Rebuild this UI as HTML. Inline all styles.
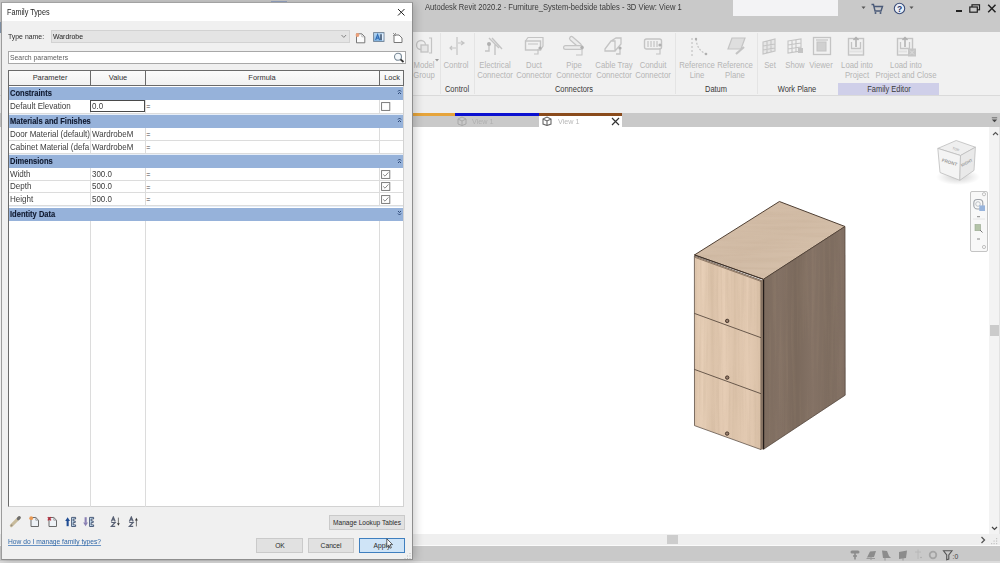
<!DOCTYPE html>
<html><head><meta charset="utf-8">
<style>
*{box-sizing:border-box}
html,body{margin:0;padding:0}
body{width:1000px;height:563px;overflow:hidden;position:relative;background:#fff;font-family:"Liberation Sans",sans-serif;color:#222}
.a{position:absolute}
.t{position:absolute;white-space:nowrap;line-height:1}
</style></head>
<body>

<div class="a" style="left:0px;top:0px;width:1000px;height:32px;background:#c9c9c9"></div>
<div class="t " style="left:424.5px;top:2.52px;font-size:8.6px;color:#3a3a3a;font-weight:400;transform:scaleX(0.885);transform-origin:0 0;">Autodesk Revit 2020.2 - Furniture_System-bedside tables - 3D View: View 1</div>
<div class="a" style="left:733px;top:0px;width:105px;height:16px;background:#f3f3f5"></div>
<svg class="a" style="left:860px;top:5px;" width="8" height="6" viewBox="0 0 8 6"><path d="M1.5 1.5 L3.5 4 L5.5 1.5Z" fill="#555"/></svg>
<svg class="a" style="left:870px;top:2px;" width="14" height="13" viewBox="0 0 14 13"><path d="M1.5 2.5 L3.5 2.5 L5 9 L11 9 L12.5 4.5 L4 4.5" fill="none" stroke="#4a5a78" stroke-width="1.4"/><circle cx="5.5" cy="11" r="1" fill="#4a5a78"/><circle cx="10.5" cy="11" r="1" fill="#4a5a78"/></svg>
<svg class="a" style="left:893px;top:2px;" width="13" height="13" viewBox="0 0 13 13"><circle cx="6.5" cy="6.5" r="5.2" fill="#e8eef8" stroke="#3a4c78" stroke-width="1.1"/><text x="6.5" y="9.6" font-size="8.5" font-weight="bold" text-anchor="middle" fill="#23386a" font-family="Liberation Sans">?</text></svg>
<svg class="a" style="left:908px;top:5px;" width="8" height="6" viewBox="0 0 8 6"><path d="M1.5 1.5 L3.5 4 L5.5 1.5Z" fill="#555"/></svg>
<div class="a" style="left:956px;top:10px;width:6px;height:1.6px;background:#222"></div>
<svg class="a" style="left:969px;top:4px;" width="12" height="9" viewBox="0 0 12 9"><rect x="3" y="0.8" width="7.5" height="5" fill="none" stroke="#222" stroke-width="1.2"/><rect x="0.8" y="3" width="7.5" height="5.2" fill="#c9c9c9" stroke="#222" stroke-width="1.2"/></svg>
<svg class="a" style="left:987px;top:4px;" width="10" height="9" viewBox="0 0 10 9"><path d="M1.2 0.8 L8.5 8.2 M8.5 0.8 L1.2 8.2" stroke="#222" stroke-width="1.5"/></svg>
<div class="a" style="left:0px;top:32px;width:1000px;height:64px;background:#f1f1f1;border-bottom:1px solid #dadada"></div>
<div class="t " style="left:424px;top:60.52px;font-size:8.6px;color:#b5b5b5;font-weight:400;transform:translateX(-50%) scaleX(0.9);transform-origin:50% 0;">Model</div>
<div class="t " style="left:424px;top:70.52px;font-size:8.6px;color:#b5b5b5;font-weight:400;transform:translateX(-50%) scaleX(0.9);transform-origin:50% 0;">Group</div>
<svg class="a" style="left:434px;top:58px;" width="6" height="5" viewBox="0 0 6 5"><path d="M1 1 L3 3.5 L5 1Z" fill="#9a9a9a"/></svg>
<div class="t " style="left:456.3px;top:60.52px;font-size:8.6px;color:#b5b5b5;font-weight:400;transform:translateX(-50%) scaleX(0.9);transform-origin:50% 0;">Control</div>
<div class="t " style="left:494.7px;top:60.52px;font-size:8.6px;color:#b5b5b5;font-weight:400;transform:translateX(-50%) scaleX(0.9);transform-origin:50% 0;">Electrical</div>
<div class="t " style="left:494.7px;top:70.52px;font-size:8.6px;color:#b5b5b5;font-weight:400;transform:translateX(-50%) scaleX(0.9);transform-origin:50% 0;">Connector</div>
<div class="t " style="left:534px;top:60.52px;font-size:8.6px;color:#b5b5b5;font-weight:400;transform:translateX(-50%) scaleX(0.9);transform-origin:50% 0;">Duct</div>
<div class="t " style="left:534px;top:70.52px;font-size:8.6px;color:#b5b5b5;font-weight:400;transform:translateX(-50%) scaleX(0.9);transform-origin:50% 0;">Connector</div>
<div class="t " style="left:574px;top:60.52px;font-size:8.6px;color:#b5b5b5;font-weight:400;transform:translateX(-50%) scaleX(0.9);transform-origin:50% 0;">Pipe</div>
<div class="t " style="left:574px;top:70.52px;font-size:8.6px;color:#b5b5b5;font-weight:400;transform:translateX(-50%) scaleX(0.9);transform-origin:50% 0;">Connector</div>
<div class="t " style="left:613.7px;top:60.52px;font-size:8.6px;color:#b5b5b5;font-weight:400;transform:translateX(-50%) scaleX(0.9);transform-origin:50% 0;">Cable Tray</div>
<div class="t " style="left:613.7px;top:70.52px;font-size:8.6px;color:#b5b5b5;font-weight:400;transform:translateX(-50%) scaleX(0.9);transform-origin:50% 0;">Connector</div>
<div class="t " style="left:653.4px;top:60.52px;font-size:8.6px;color:#b5b5b5;font-weight:400;transform:translateX(-50%) scaleX(0.9);transform-origin:50% 0;">Conduit</div>
<div class="t " style="left:653.4px;top:70.52px;font-size:8.6px;color:#b5b5b5;font-weight:400;transform:translateX(-50%) scaleX(0.9);transform-origin:50% 0;">Connector</div>
<div class="t " style="left:697px;top:60.52px;font-size:8.6px;color:#b5b5b5;font-weight:400;transform:translateX(-50%) scaleX(0.9);transform-origin:50% 0;">Reference</div>
<div class="t " style="left:697px;top:70.52px;font-size:8.6px;color:#b5b5b5;font-weight:400;transform:translateX(-50%) scaleX(0.9);transform-origin:50% 0;">Line</div>
<div class="t " style="left:735px;top:60.52px;font-size:8.6px;color:#b5b5b5;font-weight:400;transform:translateX(-50%) scaleX(0.9);transform-origin:50% 0;">Reference</div>
<div class="t " style="left:735px;top:70.52px;font-size:8.6px;color:#b5b5b5;font-weight:400;transform:translateX(-50%) scaleX(0.9);transform-origin:50% 0;">Plane</div>
<div class="t " style="left:769.6px;top:60.52px;font-size:8.6px;color:#b5b5b5;font-weight:400;transform:translateX(-50%) scaleX(0.9);transform-origin:50% 0;">Set</div>
<div class="t " style="left:795.4px;top:60.52px;font-size:8.6px;color:#b5b5b5;font-weight:400;transform:translateX(-50%) scaleX(0.9);transform-origin:50% 0;">Show</div>
<div class="t " style="left:821.3px;top:60.52px;font-size:8.6px;color:#b5b5b5;font-weight:400;transform:translateX(-50%) scaleX(0.9);transform-origin:50% 0;">Viewer</div>
<div class="t " style="left:856.8px;top:60.52px;font-size:8.6px;color:#b5b5b5;font-weight:400;transform:translateX(-50%) scaleX(0.9);transform-origin:50% 0;">Load into</div>
<div class="t " style="left:856.8px;top:70.52px;font-size:8.6px;color:#b5b5b5;font-weight:400;transform:translateX(-50%) scaleX(0.9);transform-origin:50% 0;">Project</div>
<div class="t " style="left:906.4px;top:60.52px;font-size:8.6px;color:#b5b5b5;font-weight:400;transform:translateX(-50%) scaleX(0.9);transform-origin:50% 0;">Load into</div>
<div class="t " style="left:906.4px;top:70.52px;font-size:8.6px;color:#b5b5b5;font-weight:400;transform:translateX(-50%) scaleX(0.9);transform-origin:50% 0;">Project and Close</div>
<div class="a" style="left:838px;top:82.6px;width:101px;height:12px;background:#cfcfe9"></div>
<div class="t " style="left:456.5px;top:85.17px;font-size:8.3px;color:#3a3a3a;font-weight:400;transform:translateX(-50%) scaleX(0.9);transform-origin:50% 0;">Control</div>
<div class="t " style="left:574px;top:85.17px;font-size:8.3px;color:#3a3a3a;font-weight:400;transform:translateX(-50%) scaleX(0.9);transform-origin:50% 0;">Connectors</div>
<div class="t " style="left:716px;top:85.17px;font-size:8.3px;color:#3a3a3a;font-weight:400;transform:translateX(-50%) scaleX(0.9);transform-origin:50% 0;">Datum</div>
<div class="t " style="left:797px;top:85.17px;font-size:8.3px;color:#3a3a3a;font-weight:400;transform:translateX(-50%) scaleX(0.9);transform-origin:50% 0;">Work Plane</div>
<div class="t " style="left:888.5px;top:85.17px;font-size:8.3px;color:#3a3a3a;font-weight:400;transform:translateX(-50%) scaleX(0.9);transform-origin:50% 0;">Family Editor</div>
<div class="a" style="left:439.5px;top:33px;width:1px;height:61px;background:#e4e4e4"></div>
<div class="a" style="left:473.5px;top:33px;width:1px;height:61px;background:#e4e4e4"></div>
<div class="a" style="left:675px;top:33px;width:1px;height:61px;background:#e4e4e4"></div>
<div class="a" style="left:757px;top:33px;width:1px;height:61px;background:#e4e4e4"></div>
<svg class="a" style="left:414px;top:36px;" width="20" height="20" viewBox="0 0 20 20"><circle cx="7" cy="9" r="4.5" fill="none" stroke="#c4c4c4" stroke-width="1.3"/><rect x="7" y="9" width="7" height="7" fill="#e6e6e6" stroke="#c4c4c4" stroke-width="1.3"/><path d="M15 2 L17.5 2 L17.5 17 L15 17" fill="none" stroke="#c4c4c4" stroke-width="1.2"/></svg>
<svg class="a" style="left:447px;top:36px;" width="20" height="20" viewBox="0 0 20 20"><path d="M10 1 V19 M3 12 H9 M11 7 H17 M14 5 L17 7 L14 9 M5 10 L3 12 L5 14" fill="none" stroke="#c4c4c4" stroke-width="1.2"/></svg>
<svg class="a" style="left:484px;top:36px;" width="20" height="20" viewBox="0 0 20 20"><path d="M5 2 L15 12 M8 2 L18 13 M11 8 L11 19 M5 8 V15 H1" fill="none" stroke="#c4c4c4" stroke-width="1.4"/><circle cx="5" cy="8" r="2" fill="#b0b0b0"/></svg>
<svg class="a" style="left:524px;top:36px;" width="20" height="20" viewBox="0 0 20 20"><rect x="1.5" y="5" width="15" height="9" fill="none" stroke="#c4c4c4" stroke-width="1.4"/><path d="M1.5 5 L4 1.5 H19 V10 L16.5 14 M4 8 H14 M14 13 V18 H10" fill="none" stroke="#c4c4c4" stroke-width="1.2"/><circle cx="16" cy="12" r="1.6" fill="#b0b0b0"/></svg>
<svg class="a" style="left:560px;top:33px;" width="26" height="25" viewBox="0 0 26 25"><path d="M11.5 5.5 L19.5 12.5" stroke="#c4c4c4" stroke-width="5" stroke-linecap="round"/><path d="M11.5 5.5 L19.5 12.5" stroke="#ececec" stroke-width="2.6" stroke-linecap="round"/><path d="M5.5 14.5 H21" stroke="#c4c4c4" stroke-width="5" stroke-linecap="round"/><path d="M5.5 14.5 H21" stroke="#ececec" stroke-width="2.6" stroke-linecap="round"/><circle cx="22" cy="14.5" r="1.7" fill="#b0b0b0"/><path d="M22 16 V22 H16" fill="none" stroke="#c4c4c4" stroke-width="1.1"/></svg>
<svg class="a" style="left:603px;top:36px;" width="20" height="20" viewBox="0 0 20 20"><path d="M2 13 L8 5 L12 5 L12 15 L2 15 Z M8 5 L13 2 L18 2 L18 8 L12 15 M17 12 V18 H13" fill="none" stroke="#c4c4c4" stroke-width="1.3"/><circle cx="17" cy="12" r="1.6" fill="#b0b0b0"/></svg>
<svg class="a" style="left:643px;top:36px;" width="20" height="20" viewBox="0 0 20 20"><rect x="1.5" y="3" width="17" height="10" rx="2" fill="none" stroke="#c4c4c4" stroke-width="1.4"/><path d="M5 5 V11 M8 5 V11 M11 5 V11 M14 5 V11 M17 12 V18 H13" fill="none" stroke="#c4c4c4" stroke-width="1.2"/><circle cx="17" cy="9" r="1.6" fill="#b0b0b0"/></svg>
<svg class="a" style="left:690px;top:36px;" width="20" height="20" viewBox="0 0 20 20"><path d="M2 2 V20" stroke="#c4c4c4" stroke-width="1.2" stroke-dasharray="2 2"/><path d="M6 3 Q7 14 16 18" fill="none" stroke="#c4c4c4" stroke-width="1.2" stroke-dasharray="2 1.5"/><circle cx="16" cy="18" r="1.3" fill="#b0b0b0"/><circle cx="6" cy="3" r="1.2" fill="#b0b0b0"/></svg>
<svg class="a" style="left:726px;top:36px;" width="20" height="20" viewBox="0 0 20 20"><path d="M6 2 H19 L15 13 H2 Z" fill="#dedede" stroke="#c4c4c4" stroke-width="1.2"/><path d="M10 18 L18 11" stroke="#c4c4c4" stroke-width="2.2"/></svg>
<svg class="a" style="left:761px;top:36px;" width="18" height="20" viewBox="0 0 18 20"><path d="M2 6 L14 3 V15 L2 18 Z M6 5 V17 M10 4 V16 M2 10 L14 8 M2 14 L14 12" fill="#e6e6e6" stroke="#c4c4c4" stroke-width="1.1"/></svg>
<svg class="a" style="left:786px;top:36px;" width="20" height="20" viewBox="0 0 20 20"><path d="M2 5 L15 3 V15 L2 17 Z M6 4.5 V16.5 M10 4 V16 M2 9 L15 7 M2 13 L15 11" fill="none" stroke="#c4c4c4" stroke-width="1.1"/><rect x="12" y="12" width="5" height="5" fill="#c4c4c4"/></svg>
<svg class="a" style="left:812px;top:36px;" width="20" height="20" viewBox="0 0 20 20"><rect x="1.5" y="1.5" width="17" height="17" fill="none" stroke="#c4c4c4" stroke-width="1.3"/><rect x="5" y="6" width="9" height="9" fill="#d0d0d0" stroke="#c4c4c4"/><path d="M4 4 H16" stroke="#c4c4c4" stroke-width="1.2"/></svg>
<svg class="a" style="left:846px;top:36px;" width="21" height="21" viewBox="0 0 21 21"><rect x="2.5" y="2.5" width="15" height="16.5" fill="none" stroke="#c4c4c4" stroke-width="1.4"/><path d="M5.5 6 V12.5 H14.5 V6" fill="none" stroke="#c4c4c4" stroke-width="1.3"/><path d="M10 11 V1.5 M7.5 4 L10 1.5 L12.5 4" fill="none" stroke="#b0b0b0" stroke-width="1.5"/><path d="M3 15.5 H17" stroke="#e2e2e2" stroke-width="2"/></svg>
<svg class="a" style="left:895px;top:36px;" width="23" height="22" viewBox="0 0 23 22"><rect x="2.5" y="2.5" width="15" height="16.5" fill="none" stroke="#c4c4c4" stroke-width="1.4"/><path d="M5.5 6 V12.5 H14.5 V6" fill="none" stroke="#c4c4c4" stroke-width="1.3"/><path d="M10 11 V1.5 M7.5 4 L10 1.5 L12.5 4" fill="none" stroke="#b0b0b0" stroke-width="1.5"/><path d="M3 15.5 H12" stroke="#e2e2e2" stroke-width="2"/><rect x="13" y="12.5" width="8" height="8" fill="#c6c6c6"/><path d="M15 14.5 L19 18.5 M19 14.5 L15 18.5" stroke="#ddd" stroke-width="1"/></svg>
<div class="a" style="left:0px;top:96px;width:1000px;height:17px;background:#eeeeee"></div>
<div class="a" style="left:0px;top:113px;width:1000px;height:13.6px;background:#c9c9c9"></div>
<div class="a" style="left:413px;top:113.4px;width:42px;height:2.8px;background:#e6a43a"></div>
<div class="a" style="left:455px;top:113.4px;width:84px;height:2.8px;background:#0a10d0"></div>
<div class="a" style="left:539px;top:113.4px;width:83px;height:2.8px;background:#8a4b1c"></div>
<div class="a" style="left:539px;top:116.2px;width:83px;height:10.6px;background:#fff"></div>
<svg class="a" style="left:456px;top:116px;" width="12" height="10" viewBox="0 0 12 10"><path d="M2 3 L6 1 L10 3 V8 L6 9.5 L2 8 Z M2 3 L6 5 L10 3 M6 5 V9.5" fill="none" stroke="#a8a8a8" stroke-width="1"/></svg>
<div class="t " style="left:472px;top:117.53px;font-size:8px;color:#b0b0b0;font-weight:400;transform:scaleX(0.9);transform-origin:0 0;">View 1</div>
<svg class="a" style="left:541px;top:116px;" width="12" height="10" viewBox="0 0 12 10"><path d="M2 3 L6 1 L10 3 V8 L6 9.5 L2 8 Z M2 3 L6 5 L10 3 M6 5 V9.5" fill="none" stroke="#666" stroke-width="1.1"/></svg>
<div class="t " style="left:557.5px;top:117.53px;font-size:8px;color:#b8b8b8;font-weight:400;transform:scaleX(0.9);transform-origin:0 0;">View 1</div>
<svg class="a" style="left:611px;top:116.5px;" width="9" height="9" viewBox="0 0 9 9"><path d="M1 1 L8 8 M8 1 L1 8" stroke="#333" stroke-width="1.2"/></svg>
<svg class="a" style="left:991px;top:117.3px;" width="7" height="6" viewBox="0 0 7 6"><path d="M0.8 0.8 H6.2" stroke="#555" stroke-width="0.8"/><path d="M0.8 2.5 L3.5 5.3 L6.2 2.5 Z" fill="#444"/></svg>
<div class="a" style="left:0px;top:126.6px;width:1000px;height:407.4px;background:#fff"></div>
<div class="a" style="left:988.5px;top:126.6px;width:11.5px;height:407.4px;background:#f3f3f3;border-right:1px solid #e2e2e2"></div>
<svg class="a" style="left:991.5px;top:130.5px;" width="7" height="5" viewBox="0 0 7 5"><path d="M1 4 L3.5 1.5 L6 4" fill="none" stroke="#555" stroke-width="1.1"/></svg>
<div class="a" style="left:989.5px;top:325.3px;width:9.5px;height:10.7px;background:#cbcbcb"></div>
<svg class="a" style="left:991px;top:526px;" width="7" height="5" viewBox="0 0 7 5"><path d="M1 1 L3.5 3.5 L6 1" fill="none" stroke="#444" stroke-width="1.2"/></svg>
<svg class="a" style="left:930px;top:135px;" width="52" height="52" viewBox="0 0 52 52"><defs><radialGradient id="vcs" cx="50%" cy="50%" r="50%"><stop offset="0" stop-color="#000" stop-opacity=".18"/><stop offset="1" stop-color="#000" stop-opacity="0"/></radialGradient></defs>
<ellipse cx="28" cy="42" rx="22" ry="8" fill="url(#vcs)"/>
<path d="M26.2 5.5 L45.4 12.2 L30.5 20.5 L7.8 13.4 Z" fill="#efefef" stroke="#bdbdbd" stroke-width="0.8"/>
<path d="M7.8 13.4 L30.5 20.5 L29.8 45.3 L10 37.5 Z" fill="#f4f4f4" stroke="#bdbdbd" stroke-width="0.8"/>
<path d="M30.5 20.5 L45.4 12.2 L44 35.4 L29.8 45.3 Z" fill="#e9e9e9" stroke="#bdbdbd" stroke-width="0.8"/>
<text x="11.5" y="26.5" font-size="4.6" fill="#9a9a9a" font-family="Liberation Sans" font-weight="bold" transform="rotate(17 11.5 26.5)">FRONT</text>
<text x="32" y="32" font-size="4" fill="#9a9a9a" font-family="Liberation Sans" font-weight="bold" transform="rotate(-29 32 32)">RIGHT</text>
<text x="22" y="14" font-size="3.5" fill="#9a9a9a" font-family="Liberation Sans" transform="rotate(20 22 14)">TOP</text></svg>
<div class="a" style="left:970px;top:190.5px;width:18px;height:61px;background:#f8f8f8;border:1px solid #c4c4c4;border-radius:2px"></div>
<svg class="a" style="left:971px;top:191px;" width="16" height="60" viewBox="0 0 16 60"><circle cx="13" cy="3.2" r="1.6" fill="none" stroke="#aaa" stroke-width="0.7"/>
<rect x="2.8" y="8.5" width="9" height="9.5" rx="3.5" fill="none" stroke="#a0a4aa" stroke-width="1.1"/><circle cx="7" cy="13" r="2.3" fill="none" stroke="#b0b4ba" stroke-width="0.8"/><rect x="8.3" y="14.4" width="5.7" height="5.6" fill="#98b4dc"/>
<rect x="6" y="25.2" width="3" height="1" fill="#888"/>
<path d="M2 28 H14" stroke="#e0e0e0" stroke-width="0.8"/>
<rect x="4" y="33.5" width="5.6" height="6.2" fill="#b4c4a8" stroke="#98a890" stroke-width="0.6"/><path d="M9 39 L11.5 41.5" stroke="#777" stroke-width="1"/>
<rect x="6" y="47.5" width="3" height="1" fill="#888"/>
<circle cx="13" cy="56" r="1.6" fill="none" stroke="#aaa" stroke-width="0.7"/></svg>
<svg class="a" style="left:690px;top:198px;" width="160" height="256" viewBox="0 0 160 256"><defs>
<filter id="grain" x="0" y="0" width="1" height="1"><feTurbulence type="fractalNoise" baseFrequency="0.35 0.012" numOctaves="2" seed="3" result="n"/><feColorMatrix in="n" type="matrix" values="0 0 0 0 0.45  0 0 0 0 0.33  0 0 0 0 0.22  0.9 0 0 0 -0.38" result="c"/><feComposite in="c" in2="SourceGraphic" operator="in"/></filter>
<filter id="grain2" x="0" y="0" width="1" height="1"><feTurbulence type="fractalNoise" baseFrequency="0.015 0.3" numOctaves="2" seed="7" result="n"/><feColorMatrix in="n" type="matrix" values="0 0 0 0 0.45  0 0 0 0 0.33  0 0 0 0 0.22  0.9 0 0 0 -0.38" result="c"/><feComposite in="c" in2="SourceGraphic" operator="in"/></filter>
<linearGradient id="gr1" x1="0" y1="0" x2="1" y2="0">
<stop offset="0" stop-color="#dfc6ad"/><stop offset=".12" stop-color="#e7cfb7"/><stop offset=".28" stop-color="#dbc2a9"/><stop offset=".45" stop-color="#e6cdb5"/><stop offset=".6" stop-color="#dcc3aa"/><stop offset=".8" stop-color="#e4cbb3"/><stop offset="1" stop-color="#d9c0a7"/></linearGradient>
<linearGradient id="gr2" x1="0" y1="0" x2="1" y2="0">
<stop offset="0" stop-color="#7c6b5e"/><stop offset=".2" stop-color="#837164"/><stop offset=".4" stop-color="#7a695c"/><stop offset=".6" stop-color="#847265"/><stop offset=".8" stop-color="#7d6c5f"/><stop offset="1" stop-color="#827064"/></linearGradient>
<linearGradient id="gr3" x1="0" y1="0" x2="1" y2="1">
<stop offset="0" stop-color="#d6c0ab"/><stop offset=".5" stop-color="#d1bba5"/><stop offset="1" stop-color="#d9c4af"/></linearGradient>
</defs>
<g transform="translate(-690,-198)">
<path d="M779.4 201.5 L845 226.5 L763.5 279.2 L694.4 255 Z" fill="url(#gr3)" stroke="#4e3e32" stroke-width="1"/>
<path d="M779.4 201.5 L845 226.5 L763.5 279.2 L694.4 255 Z" fill="#000" filter="url(#grain2)" opacity="0.4"/>
<path d="M763.6 279.4 L845 226.5 L845.2 395.2 L763.6 449.2 Z" fill="url(#gr2)" stroke="#4a3c32" stroke-width="0.7"/>
<path d="M763.6 279.4 L845 226.5 L845.2 395.2 L763.6 449.2 Z" fill="#000" filter="url(#grain)" opacity="0.35"/>
<path d="M694.4 256 L761 280.3 L761 449.6 L694.5 425.6 Z" fill="url(#gr1)" stroke="#4a3c32" stroke-width="0.7"/>
<path d="M694.4 256 L761 280.3 L761 449.6 L694.5 425.6 Z" fill="#000" filter="url(#grain)" opacity="0.5"/>
<path d="M761 280.3 L763.6 279.4 L763.6 449.2 L761 449.6 Z" fill="#857262"/>
<path d="M694.4 313.4 L761 337.7 M694.4 369.4 L761 393.7" stroke="#4a3c32" stroke-width="0.8"/>
<path d="M694.4 254.8 L763 279.3" stroke="#3a2c24" stroke-width="0.9"/>
<path d="M695 257.4 L761 281.4" stroke="#6a5646" stroke-width="0.7"/>
<path d="M763.6 279.4 V449.2" stroke="#1e1814" stroke-width="1.1"/>
<circle cx="727.2" cy="320.9" r="1.7" fill="#9a8070" stroke="#3a2a20" stroke-width="0.9"/>
<circle cx="727.2" cy="377.6" r="1.7" fill="#9a8070" stroke="#3a2a20" stroke-width="0.9"/>
<circle cx="727.1" cy="433.6" r="1.7" fill="#9a8070" stroke="#3a2a20" stroke-width="0.9"/>
</g></svg>
<div class="a" style="left:0px;top:534px;width:1000px;height:11.5px;background:#efefef;border-bottom:1.5px solid #fafafa"></div>
<div class="a" style="left:666.5px;top:535px;width:11.5px;height:9px;background:#cdcdcd"></div>
<svg class="a" style="left:991px;top:537px;" width="8" height="8" viewBox="0 0 8 8"><g fill="#c4c4c4"><rect x="5" y="1" width="1.2" height="1.2"/><rect x="5" y="3.5" width="1.2" height="1.2"/><rect x="2.5" y="3.5" width="1.2" height="1.2"/><rect x="5" y="6" width="1.2" height="1.2"/><rect x="2.5" y="6" width="1.2" height="1.2"/><rect x="0" y="6" width="1.2" height="1.2"/></g></svg>
<svg class="a" style="left:979px;top:536px;" width="8" height="8" viewBox="0 0 8 8"><path d="M2.5 1 L5.5 4 L2.5 7" fill="none" stroke="#555" stroke-width="1.3"/></svg>
<div class="a" style="left:0px;top:545.5px;width:1000px;height:15.3px;background:#c9c9c9"></div>
<div class="a" style="left:0px;top:561px;width:1000px;height:2px;background:#dcdcdc"></div>
<svg class="a" style="left:849px;top:548px;" width="120" height="14" viewBox="0 0 120 14"><path d="M1.5 4 Q1.5 2.5 3 2.5 H9 Q10.5 2.5 10.5 4 Q10.5 5.5 9 5.5 H3 Q1.5 5.5 1.5 4Z" fill="#8c8c8c"/><path d="M6 5 V11.5 M4 8 H8" stroke="#8c8c8c" stroke-width="1.6"/>
<path d="M18 9.5 L21 3.5 L27 3 L25 9 Z" fill="#8c8c8c"/><path d="M17.5 10.5 H26 M22 9 V12" stroke="#9a9a9a" stroke-width="1"/>
<path d="M33 2.5 L38 3 L40 8 L42 10 L34 10 Z" fill="#8c8c8c"/><path d="M36 10 V12.5" stroke="#999" stroke-width="1"/>
<path d="M50 4 L58 2.5 L57 10 L50 11 Z" fill="#8c8c8c"/><path d="M54 10 V12.5" stroke="#999" stroke-width="1"/>
<path d="M66 4 H72 M69 1.5 V11" stroke="#b8b8b8" stroke-width="1"/><circle cx="72" cy="9.5" r="0.8" fill="#aaa"/>
<circle cx="84" cy="7" r="3.3" fill="none" stroke="#a4a4a4" stroke-width="1.8"/>
<path d="M94.5 2.8 H103 L99.8 7 V11 L97.7 11.8 V7 Z" fill="none" stroke="#555" stroke-width="1.1"/>
<text x="103.6" y="11" font-size="6.8" fill="#444" font-family="Liberation Sans">:0</text></svg>
<div class="a" style="left:1px;top:2.3px;width:412px;height:558px;background:#f0f0f0;border:1px solid #8e8e8e;border-top-color:#a2a2a2;border-left-color:#9c9c9c;box-shadow:2px 1px 9px rgba(0,0,0,.20)"></div>
<div class="a" style="left:2px;top:3.3px;width:410px;height:18px;background:#fff"></div>
<div class="a" style="left:0px;top:22px;width:1.2px;height:11px;background:#7d8ea3"></div>
<div class="a" style="left:271px;top:0.6px;width:16px;height:1.6px;background:#8a98b4"></div>
<div class="t " style="left:6.7px;top:9.06px;font-size:8.2px;color:#252525;font-weight:400;transform:scaleX(0.885);transform-origin:0 0;">Family Types</div>
<svg class="a" style="left:397px;top:8.3px;" width="9" height="9" viewBox="0 0 9 9"><path d="M1 1 L7.5 7.5 M7.5 1 L1 7.5" stroke="#222" stroke-width="1"/></svg>
<div class="t " style="left:8.2px;top:32.95px;font-size:7.5px;color:#2a2a2a;font-weight:400;transform:scaleX(0.92);transform-origin:0 0;">Type name:</div>
<div class="a" style="left:51px;top:30.4px;width:299px;height:12.6px;background:#e4e4e4;border:1px solid #d2d2d2"></div>
<div class="t " style="left:53.2px;top:33.05px;font-size:7.5px;color:#222;font-weight:400;transform:scaleX(0.92);transform-origin:0 0;">Wardrobe</div>
<svg class="a" style="left:340px;top:34px;" width="8" height="5" viewBox="0 0 8 5"><path d="M1.5 1 L3.8 3.4 L6.1 1" fill="none" stroke="#7a7a7a" stroke-width="0.9"/></svg>
<svg class="a" style="left:354px;top:31.5px;" width="13" height="12" viewBox="0 0 13 12"><path d="M2.5 1.8 H7.8 L10.8 4.8 V10.8 H2.5 Z" fill="#fbfbfb" stroke="#6a6a6a" stroke-width="0.9"/><path d="M7.8 1.8 L7.8 4.8 H10.8" fill="none" stroke="#999" stroke-width="0.6"/><circle cx="3.5" cy="3" r="1.9" fill="#eba07a"/></svg>
<svg class="a" style="left:373px;top:32px;" width="12" height="11" viewBox="0 0 12 11"><defs><linearGradient id="aig" x1="0" y1="0" x2="0" y2="1"><stop offset="0" stop-color="#b8d8f4"/><stop offset="1" stop-color="#80b2e0"/></linearGradient></defs><rect x="0.6" y="0.6" width="10.4" height="8.8" fill="url(#aig)" stroke="#6d7f92" stroke-width="0.9"/><path d="M2.6 8 L4.6 2.6 L6.6 8 M3.4 6.1 H5.8" fill="none" stroke="#2f6cb4" stroke-width="1.1"/><path d="M8 2.2 V8" stroke="#2a3040" stroke-width="1.1"/><rect x="9.1" y="1.6" width="1.3" height="7" fill="#eef6ff"/></svg>
<svg class="a" style="left:392px;top:31.5px;" width="12" height="12" viewBox="0 0 12 12"><path d="M2 3 H7 L10 6 V10.5 H2 Z" fill="#fff" stroke="#777" stroke-width="1"/><path d="M1 1 L4 4 M4 1 L1 4" stroke="#888" stroke-width="0.9"/></svg>
<div class="a" style="left:8px;top:51.3px;width:397.5px;height:12.3px;background:#fff;border:1px solid #a8a8a8"></div>
<div class="t " style="left:9.8px;top:53.51px;font-size:7.2px;color:#5c5c5c;font-weight:400;transform:scaleX(0.95);transform-origin:0 0;">Search parameters</div>
<svg class="a" style="left:393px;top:51.8px;" width="12" height="11" viewBox="0 0 12 11"><circle cx="5" cy="4.8" r="3.5" fill="#f4f8fb" stroke="#7a8a98" stroke-width="1.1"/><path d="M7.5 7.3 L10.5 10" stroke="#333" stroke-width="1.8"/></svg>
<div class="a" style="left:8px;top:70px;width:396px;height:437px;background:#fff;border:1px solid #d2d2d2;border-left-color:#6a6a6a"></div>
<div class="a" style="left:8px;top:70px;width:396px;height:16px;background:linear-gradient(#fbfbfb,#f1f1f1);border:1px solid #6a6a6a"></div>
<div class="a" style="left:90px;top:70px;width:1px;height:16px;background:#6a6a6a"></div>
<div class="a" style="left:145px;top:70px;width:1px;height:16px;background:#6a6a6a"></div>
<div class="a" style="left:379px;top:70px;width:1px;height:16px;background:#6a6a6a"></div>
<div class="t " style="left:49.5px;top:74.23px;font-size:8.0px;color:#333;font-weight:400;transform:translateX(-50%) scaleX(0.93);transform-origin:50% 0;">Parameter</div>
<div class="t " style="left:117.8px;top:74.23px;font-size:8.0px;color:#333;font-weight:400;transform:translateX(-50%) scaleX(0.93);transform-origin:50% 0;">Value</div>
<div class="t " style="left:262.3px;top:74.23px;font-size:8.0px;color:#333;font-weight:400;transform:translateX(-50%) scaleX(0.93);transform-origin:50% 0;">Formula</div>
<div class="t " style="left:391.8px;top:74.23px;font-size:8.0px;color:#333;font-weight:400;transform:translateX(-50%) scaleX(0.93);transform-origin:50% 0;">Lock</div>
<div class="a" style="left:90px;top:221px;width:1px;height:285.5px;background:#dcdcdc"></div>
<div class="a" style="left:145px;top:221px;width:1px;height:285.5px;background:#dcdcdc"></div>
<div class="a" style="left:379px;top:221px;width:1px;height:285.5px;background:#dcdcdc"></div>
<div class="a" style="left:9px;top:86.6px;width:394px;height:13.300000000000011px;background:#96b2da"></div>
<div class="t " style="left:10.2px;top:89.86px;font-size:8.2px;color:#101a30;font-weight:700;transform:scaleX(0.92);transform-origin:0 0;-webkit-text-stroke:0.12px #101a30;">Constraints</div>
<svg class="a" style="left:397px;top:89.1px;" width="5" height="6" viewBox="0 0 5 6"><path d="M1 2.5 L2.5 1 L4 2.5 M1 5 L2.5 3.5 L4 5" fill="none" stroke="#1e3a6a" stroke-width="0.9"/></svg>
<div class="a" style="left:9px;top:99.9px;width:394px;height:13.299999999999997px;background:#fff"></div>
<div class="a" style="left:90px;top:99.9px;width:1px;height:13.299999999999997px;background:#dcdcdc"></div>
<div class="a" style="left:145px;top:99.9px;width:1px;height:13.299999999999997px;background:#dcdcdc"></div>
<div class="a" style="left:379px;top:99.9px;width:1px;height:13.299999999999997px;background:#dcdcdc"></div>
<div class="t " style="left:10.2px;top:102.29px;font-size:8.4px;color:#3c3c3c;font-weight:400;transform:scaleX(0.96);transform-origin:0 0;">Default Elevation</div>
<div class="a" style="left:90.3px;top:100.30000000000001px;width:54.5px;height:12.2px;background:#fff;border:1px solid #4a4a4a"></div>
<div class="t " style="left:91.7px;top:102.29px;font-size:8.4px;color:#3c3c3c;font-weight:400;transform:scaleX(0.95);transform-origin:0 0;">0.0</div>
<div class="t " style="left:146.3px;top:103.47px;font-size:7.0px;color:#444;font-weight:400;">=</div>
<svg class="a" style="left:380.8px;top:102.10000000000001px;" width="10" height="9" viewBox="0 0 10 9"><rect x="0.6" y="0.6" width="8.2" height="7.8" fill="#fff" stroke="#6e6e6e" stroke-width="0.9"/></svg>
<div class="a" style="left:9px;top:113.2px;width:394px;height:1.6px;background:#e6eef8"></div>
<div class="a" style="left:9px;top:114.8px;width:394px;height:12.799999999999997px;background:#96b2da"></div>
<div class="t " style="left:10.2px;top:118.06px;font-size:8.2px;color:#101a30;font-weight:700;transform:scaleX(0.92);transform-origin:0 0;-webkit-text-stroke:0.12px #101a30;">Materials and Finishes</div>
<svg class="a" style="left:397px;top:117.3px;" width="5" height="6" viewBox="0 0 5 6"><path d="M1 2.5 L2.5 1 L4 2.5 M1 5 L2.5 3.5 L4 5" fill="none" stroke="#1e3a6a" stroke-width="0.9"/></svg>
<div class="a" style="left:9px;top:127.6px;width:394px;height:12.800000000000011px;background:#fff"></div>
<div class="a" style="left:90px;top:127.6px;width:1px;height:12.800000000000011px;background:#dcdcdc"></div>
<div class="a" style="left:145px;top:127.6px;width:1px;height:12.800000000000011px;background:#dcdcdc"></div>
<div class="a" style="left:379px;top:127.6px;width:1px;height:12.800000000000011px;background:#dcdcdc"></div>
<div class="t " style="left:10.2px;top:129.99px;font-size:8.4px;color:#3c3c3c;font-weight:400;transform:scaleX(0.96);transform-origin:0 0;">Door Material (default)</div>
<div class="t " style="left:91.7px;top:129.99px;font-size:8.4px;color:#3c3c3c;font-weight:400;transform:scaleX(0.95);transform-origin:0 0;">WardrobeM</div>
<div class="t " style="left:146.3px;top:131.17px;font-size:7.0px;color:#444;font-weight:400;">=</div>
<div class="a" style="left:9px;top:140.4px;width:394px;height:13.199999999999989px;background:#fff"></div>
<div class="a" style="left:90px;top:140.4px;width:1px;height:13.199999999999989px;background:#dcdcdc"></div>
<div class="a" style="left:145px;top:140.4px;width:1px;height:13.199999999999989px;background:#dcdcdc"></div>
<div class="a" style="left:379px;top:140.4px;width:1px;height:13.199999999999989px;background:#dcdcdc"></div>
<div class="t " style="left:10.2px;top:142.79px;font-size:8.4px;color:#3c3c3c;font-weight:400;transform:scaleX(0.96);transform-origin:0 0;">Cabinet Material (defa</div>
<div class="t " style="left:91.7px;top:142.79px;font-size:8.4px;color:#3c3c3c;font-weight:400;transform:scaleX(0.95);transform-origin:0 0;">WardrobeM</div>
<div class="t " style="left:146.3px;top:143.97px;font-size:7.0px;color:#444;font-weight:400;">=</div>
<div class="a" style="left:9px;top:153.6px;width:394px;height:1.4px;background:#e6eef8"></div>
<div class="a" style="left:9px;top:155.0px;width:394px;height:12.800000000000011px;background:#96b2da"></div>
<div class="t " style="left:10.2px;top:158.26px;font-size:8.2px;color:#101a30;font-weight:700;transform:scaleX(0.92);transform-origin:0 0;-webkit-text-stroke:0.12px #101a30;">Dimensions</div>
<svg class="a" style="left:397px;top:157.5px;" width="5" height="6" viewBox="0 0 5 6"><path d="M1 2.5 L2.5 1 L4 2.5 M1 5 L2.5 3.5 L4 5" fill="none" stroke="#1e3a6a" stroke-width="0.9"/></svg>
<div class="a" style="left:9px;top:167.8px;width:394px;height:12.299999999999983px;background:#fff"></div>
<div class="a" style="left:90px;top:167.8px;width:1px;height:12.299999999999983px;background:#dcdcdc"></div>
<div class="a" style="left:145px;top:167.8px;width:1px;height:12.299999999999983px;background:#dcdcdc"></div>
<div class="a" style="left:379px;top:167.8px;width:1px;height:12.299999999999983px;background:#dcdcdc"></div>
<div class="t " style="left:10.2px;top:170.19px;font-size:8.4px;color:#3c3c3c;font-weight:400;transform:scaleX(0.96);transform-origin:0 0;">Width</div>
<div class="t " style="left:91.7px;top:170.19px;font-size:8.4px;color:#3c3c3c;font-weight:400;transform:scaleX(0.95);transform-origin:0 0;">300.0</div>
<div class="t " style="left:146.3px;top:171.37px;font-size:7.0px;color:#444;font-weight:400;">=</div>
<svg class="a" style="left:380.8px;top:170.0px;" width="10" height="9" viewBox="0 0 10 9"><rect x="0.6" y="0.6" width="8.2" height="7.8" fill="#fff" stroke="#6e6e6e" stroke-width="0.9"/><path d="M2.2 4.4 L4 6.2 L7.4 2.4" fill="none" stroke="#7a7a7a" stroke-width="0.9"/></svg>
<div class="a" style="left:9px;top:180.1px;width:394px;height:12.5px;background:#fff"></div>
<div class="a" style="left:90px;top:180.1px;width:1px;height:12.5px;background:#dcdcdc"></div>
<div class="a" style="left:145px;top:180.1px;width:1px;height:12.5px;background:#dcdcdc"></div>
<div class="a" style="left:379px;top:180.1px;width:1px;height:12.5px;background:#dcdcdc"></div>
<div class="t " style="left:10.2px;top:182.49px;font-size:8.4px;color:#3c3c3c;font-weight:400;transform:scaleX(0.96);transform-origin:0 0;">Depth</div>
<div class="t " style="left:91.7px;top:182.49px;font-size:8.4px;color:#3c3c3c;font-weight:400;transform:scaleX(0.95);transform-origin:0 0;">500.0</div>
<div class="t " style="left:146.3px;top:183.67px;font-size:7.0px;color:#444;font-weight:400;">=</div>
<svg class="a" style="left:380.8px;top:182.29999999999998px;" width="10" height="9" viewBox="0 0 10 9"><rect x="0.6" y="0.6" width="8.2" height="7.8" fill="#fff" stroke="#6e6e6e" stroke-width="0.9"/><path d="M2.2 4.4 L4 6.2 L7.4 2.4" fill="none" stroke="#7a7a7a" stroke-width="0.9"/></svg>
<div class="a" style="left:9px;top:192.6px;width:394px;height:13.0px;background:#fff"></div>
<div class="a" style="left:90px;top:192.6px;width:1px;height:13.0px;background:#dcdcdc"></div>
<div class="a" style="left:145px;top:192.6px;width:1px;height:13.0px;background:#dcdcdc"></div>
<div class="a" style="left:379px;top:192.6px;width:1px;height:13.0px;background:#dcdcdc"></div>
<div class="t " style="left:10.2px;top:194.99px;font-size:8.4px;color:#3c3c3c;font-weight:400;transform:scaleX(0.96);transform-origin:0 0;">Height</div>
<div class="t " style="left:91.7px;top:194.99px;font-size:8.4px;color:#3c3c3c;font-weight:400;transform:scaleX(0.95);transform-origin:0 0;">500.0</div>
<div class="t " style="left:146.3px;top:196.17px;font-size:7.0px;color:#444;font-weight:400;">=</div>
<svg class="a" style="left:380.8px;top:194.79999999999998px;" width="10" height="9" viewBox="0 0 10 9"><rect x="0.6" y="0.6" width="8.2" height="7.8" fill="#fff" stroke="#6e6e6e" stroke-width="0.9"/><path d="M2.2 4.4 L4 6.2 L7.4 2.4" fill="none" stroke="#7a7a7a" stroke-width="0.9"/></svg>
<div class="a" style="left:9px;top:205.6px;width:394px;height:1.9px;background:#e6eef8"></div>
<div class="a" style="left:9px;top:207.5px;width:394px;height:13.099999999999994px;background:#96b2da"></div>
<div class="t " style="left:10.2px;top:210.76px;font-size:8.2px;color:#101a30;font-weight:700;transform:scaleX(0.92);transform-origin:0 0;-webkit-text-stroke:0.12px #101a30;">Identity Data</div>
<svg class="a" style="left:397px;top:210.0px;" width="5" height="6" viewBox="0 0 5 6"><path d="M1 1 L2.5 2.5 L4 1 M1 3.5 L2.5 5 L4 3.5" fill="none" stroke="#1e3a6a" stroke-width="0.9"/></svg>
<div class="a" style="left:9px;top:112.8px;width:394px;height:1px;background:#dcdcdc"></div>
<div class="a" style="left:9px;top:140.0px;width:394px;height:1px;background:#dcdcdc"></div>
<div class="a" style="left:9px;top:153.2px;width:394px;height:1px;background:#dcdcdc"></div>
<div class="a" style="left:9px;top:179.7px;width:394px;height:1px;background:#dcdcdc"></div>
<div class="a" style="left:9px;top:192.2px;width:394px;height:1px;background:#dcdcdc"></div>
<div class="a" style="left:9px;top:205.2px;width:394px;height:1px;background:#dcdcdc"></div>
<svg class="a" style="left:9px;top:515px;" width="13" height="13" viewBox="0 0 13 13"><path d="M2.3 10.6 L10 2.9" stroke="#c8bb9c" stroke-width="3" stroke-linecap="round"/><path d="M9.3 3.6 L10.3 2.6" stroke="#6e6e6e" stroke-width="3" stroke-linecap="round"/><path d="M2 11 L3.2 9.8" stroke="#9a9080" stroke-width="1.6"/></svg>
<svg class="a" style="left:29px;top:516px;" width="11" height="11" viewBox="0 0 11 11"><path d="M2 1.5 H6.8 L9.5 4.2 V10.5 H2 Z" fill="#eef2f6" stroke="#6a6a6a" stroke-width="1"/><path d="M6.8 1.5 V4.2 H9.5" fill="none" stroke="#888" stroke-width="0.7"/><circle cx="2.2" cy="2.2" r="1.9" fill="#e99a55"/></svg>
<svg class="a" style="left:47px;top:516px;" width="11" height="11" viewBox="0 0 11 11"><path d="M2 1.5 H6.8 L9.5 4.2 V10.5 H2 Z" fill="#eef2f6" stroke="#6a6a6a" stroke-width="1"/><path d="M6.8 1.5 V4.2 H9.5" fill="none" stroke="#888" stroke-width="0.7"/><path d="M0.8 1.2 L4 4.4 M4 1.2 L0.8 4.4" stroke="#b52a3a" stroke-width="1.3"/></svg>
<svg class="a" style="left:64px;top:516px;" width="13" height="12" viewBox="0 0 13 12"><path d="M1.2 5 L3.6 1.2 L6 5 Z" fill="#1f4c94"/><rect x="2.6" y="4.6" width="2.1" height="5.6" fill="#1f4c94"/><path d="M7.6 1.4 H11.6 V3 H9.2 V5 H11.2 V6.6 H9.2 V8.9 H11.6 V10.5 H7.6 Z" fill="#cfe6f6" stroke="#3c4e6e" stroke-width="0.9"/></svg>
<svg class="a" style="left:82px;top:516px;" width="13" height="12" viewBox="0 0 13 12"><path d="M1.2 6.4 L3.6 10.2 L6 6.4 Z" fill="#8a80b4"/><rect x="2.6" y="1.2" width="2.1" height="5.6" fill="#8a80b4"/><path d="M7.6 1.4 H11.6 V3 H9.2 V5 H11.2 V6.6 H9.2 V8.9 H11.6 V10.5 H7.6 Z" fill="#cfe6f6" stroke="#3c4e6e" stroke-width="0.9"/></svg>
<svg class="a" style="left:110px;top:516px;" width="11" height="12" viewBox="0 0 11 12"><path d="M1.4 5.4 L3.3 1 L5.2 5.4 M2.1 3.9 H4.5" fill="none" stroke="#596174" stroke-width="1.25"/><path d="M1.3 6.5 H5.1 L1.4 10.4 H5.2" fill="none" stroke="#596174" stroke-width="1.2"/><path d="M8.4 1.6 V8" stroke="#666" stroke-width="0.9"/><path d="M7 7.2 L8.4 9.8 L9.8 7.2 Z" fill="#333"/></svg>
<svg class="a" style="left:128px;top:516px;" width="11" height="12" viewBox="0 0 11 12"><path d="M1.4 5.4 L3.3 1 L5.2 5.4 M2.1 3.9 H4.5" fill="none" stroke="#596174" stroke-width="1.25"/><path d="M1.3 6.5 H5.1 L1.4 10.4 H5.2" fill="none" stroke="#596174" stroke-width="1.2"/><path d="M8.4 10.4 V4" stroke="#666" stroke-width="0.9"/><path d="M7 4.6 L8.4 1.8 L9.8 4.6 Z" fill="#333"/></svg>
<div class="a" style="left:329.2px;top:515.4px;width:76.0px;height:14.399999999999977px;background:#e1e1e1;border:1px solid #cacaca"></div>
<div class="t " style="left:367.2px;top:519.04px;font-size:7.4px;color:#2a2a2a;font-weight:400;transform:translateX(-50%) scaleX(0.89);transform-origin:50% 0;">Manage Lookup Tables</div>
<div class="a" style="left:256.4px;top:537.8px;width:46.400000000000034px;height:14.900000000000091px;background:#e1e1e1;border:1px solid #cacaca"></div>
<div class="t " style="left:279.6px;top:541.77px;font-size:7.3px;color:#2a2a2a;font-weight:400;transform:translateX(-50%) scaleX(0.92);transform-origin:50% 0;">OK</div>
<div class="a" style="left:308px;top:537.8px;width:46px;height:14.900000000000091px;background:#e1e1e1;border:1px solid #cacaca"></div>
<div class="t " style="left:331.0px;top:541.77px;font-size:7.3px;color:#2a2a2a;font-weight:400;transform:translateX(-50%) scaleX(0.92);transform-origin:50% 0;">Cancel</div>
<div class="a" style="left:358.8px;top:537.8px;width:46.39999999999998px;height:14.900000000000091px;background:#cfe4f7;border:1px solid #3f7fbf"></div>
<div class="t " style="left:382.0px;top:541.77px;font-size:7.3px;color:#2a2a2a;font-weight:400;transform:translateX(-50%) scaleX(0.92);transform-origin:50% 0;">Apply</div>
<div class="t " style="left:8.2px;top:538.99px;font-size:7.1px;color:#2f66a6;font-weight:400;transform:scaleX(0.94);transform-origin:0 0;"><span style="text-decoration:underline;text-underline-offset:0.6px;text-decoration-color:#6a94c4">How do I manage family types?</span></div>
<svg class="a" style="left:386.3px;top:538px;" width="8" height="12" viewBox="0 0 8 12"><path d="M0.8 0.8 V8.8 L2.8 7.1 L4.2 10.2 L5.4 9.7 L4.1 6.6 L6.6 6.6 Z" fill="#f4f8fc" stroke="#333" stroke-width="0.75"/></svg>
<svg class="a" style="left:404px;top:552px;" width="8" height="8" viewBox="0 0 8 8"><g fill="#b8b8b8"><rect x="5.5" y="1" width="1" height="1"/><rect x="5.5" y="3.5" width="1" height="1"/><rect x="3" y="3.5" width="1" height="1"/><rect x="5.5" y="6" width="1" height="1"/><rect x="3" y="6" width="1" height="1"/><rect x="0.5" y="6" width="1" height="1"/></g></svg>
</body></html>
